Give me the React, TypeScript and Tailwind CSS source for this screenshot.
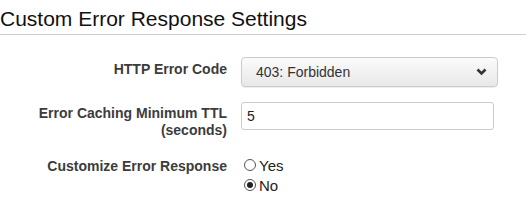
import React from 'react';

const Radio = ({ checked, label }: { checked?: boolean; label: string }) => (
  <label className="flex items-center h-[20px] text-[15px] text-[#222]">
    <span className="w-[12px] h-[12px] rounded-full border border-[#555] bg-white flex items-center justify-center mr-[3px]">
      {checked && <span className="w-[6px] h-[6px] rounded-full bg-[#222]" />}
    </span>
    {label}
  </label>
);

export default function App() {
  return (
    <div className="w-[526px] h-[221px] bg-white overflow-hidden font-['Liberation_Sans',Arial,sans-serif]">
      <div className="h-[35px] border-b border-[#cfcfcf] pt-[7px] text-[21px] leading-[24px] text-[#111]">
        Custom Error Response Settings
      </div>

      <div className="grid grid-cols-[227px_1fr] items-start gap-x-[14px] mt-[22px] text-[14px] leading-[17px]">
        <div className="text-right font-bold text-[#3c3c3c] pt-[4px]">HTTP Error Code</div>
        <div className="w-[257px] h-[30px] rounded-[4px] border border-[#ccc] bg-gradient-to-b from-[#fbfbfb] to-[#e8e8e8] shadow-[0_1px_1px_rgba(0,0,0,0.08)] flex items-center justify-between pl-[14px] pr-[10px] text-[14px] text-[#333]">
          <span>403: Forbidden</span>
          <svg width="11" height="8" viewBox="0 0 11 8">
            <path d="M1.5 1.5 L5.5 5.5 L9.5 1.5" fill="none" stroke="#333" strokeWidth="2.6" />
          </svg>
        </div>

        <div className="text-right font-bold text-[#3c3c3c] pt-[3px] mt-[15px]">
          Error Caching Minimum TTL
          <br />
          (seconds)
        </div>
        <div className="mt-[15px] w-[253px] h-[28px] rounded-[3px] border border-[#ccc] bg-white flex items-center pl-[5px] text-[14px] text-[#222]">
          5
        </div>

        <div className="text-right font-bold text-[#3c3c3c] pt-[3px] mt-[16px]">Customize Error Response</div>
        <div className="mt-[16px] pl-[3px]">
          <Radio label="Yes" />
          <Radio label="No" checked />
        </div>
      </div>
    </div>
  );
}
